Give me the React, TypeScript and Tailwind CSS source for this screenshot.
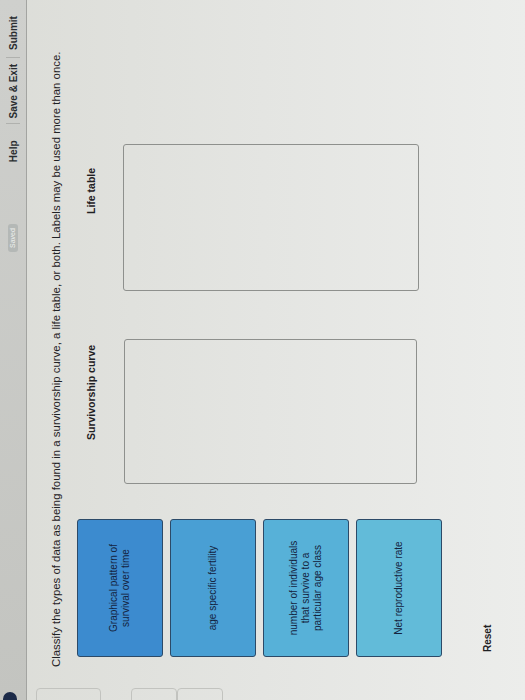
import React from "react";

const cards = [
  { lines: ["Graphical pattern of", "survival over time"], bg: "bg-[#3c8bcf]" },
  { lines: ["age specific fertility"], bg: "bg-[#499fd4]" },
  { lines: ["number of individuals", "that survive to a", "particular age class"], bg: "bg-[#57b1d8]" },
  { lines: ["Net reproductive rate"], bg: "bg-[#62bbd9]" },
];

export default function App() {
  return (
    <div className="w-[525px] h-[700px] overflow-hidden relative bg-[#e4e5e1]" style={{ fontFamily: '"Liberation Sans", Arial, sans-serif' }}>
      <div className="w-[700px] h-[525px] origin-top-left [transform:translateY(700px)_rotate(-90deg)] flex flex-col bg-linear-to-b from-[#dcddd8] via-[#e4e5e2] to-[#ecedeb]">
        {/* top bar */}
        <div className="h-[27px] shrink-0 flex items-center bg-linear-to-r from-[#c3c4c0] to-[#cfd0cd] border-b border-[#a3a4a1] text-[10px] font-bold text-[#2a2d30]">
          <div className="-ml-[6px] w-[14px] h-[14px] rounded-full bg-[#1c2a48] mt-[-6px]" />
          <div className="ml-[440px] px-[4px] h-[10px] flex items-center rounded-[3px] bg-[#b4b8b6] text-[7px] font-normal text-[#eef0ee]">Saved</div>
          <div className="ml-[62px]">Help</div>
          <div className="ml-[16px] w-px h-[14px] bg-[#b0b1ae]" />
          <div className="ml-[5px]">Save &amp; Exit</div>
          <div className="ml-[6px] w-px h-[14px] bg-[#b0b1ae]" />
          <div className="ml-[7px]">Submit</div>
        </div>

        <div className="flex flex-1">
          {/* cut-off left strip */}
          <div className="w-[12px] shrink-0 overflow-hidden flex flex-col items-end">
            <div className="mt-[9px] w-[30px] h-[65px] shrink-0 rounded-[4px] border border-[#c2c3bf]" />
            <div className="mt-[30px] w-[30px] h-[46px] shrink-0 rounded-[4px] border border-[#c2c3bf]" />
            <div className="w-[30px] h-[46px] shrink-0 rounded-[4px] border border-[#c2c3bf]" />
          </div>

          <div className="flex flex-col">
            <div className="mt-[22px] ml-[21px] text-[11.4px] leading-[14px] text-[#1f2124] whitespace-nowrap">
              Classify the types of data as being found in a survivorship curve, a life table, or both. Labels may be used more than once.
            </div>

            <div className="flex mt-[14px]">
              {/* cards column */}
              <div className="ml-[31px] flex flex-col">
                <div className="flex flex-col gap-[7px]">
                  {cards.map((c, i) => (
                    <div
                      key={i}
                      className={`w-[138px] h-[86px] rounded-[3px] border border-[#2c4a68] ${c.bg} flex flex-col items-center justify-center text-center text-[10px] leading-[12px] text-[#14233e]`}
                    >
                      {c.lines.map((l, j) => (
                        <div key={j}>{l}</div>
                      ))}
                    </div>
                  ))}
                </div>
                <div className="mt-[38px] ml-[5px] text-[10px] font-bold text-[#1f2124]">Reset</div>
              </div>

              {/* Survivorship curve column */}
              <div className="ml-[35px] flex flex-col">
                <div className="mt-[7px] h-[14px] pl-[44px] text-[10.5px] font-bold text-[#1f2124] whitespace-nowrap">Survivorship curve</div>
                <div className="mt-[26px] w-[145px] h-[293px] rounded-[3px] border border-[#8e908d]" />
              </div>

              {/* Life table column */}
              <div className="ml-[48px] flex flex-col">
                <div className="mt-[7px] h-[14px] pl-[77px] text-[10.5px] font-bold text-[#1f2124] whitespace-nowrap">Life table</div>
                <div className="mt-[25px] w-[147px] h-[296px] rounded-[3px] border border-[#8e908d]" />
              </div>
            </div>
          </div>
        </div>
      </div>
    </div>
  );
}
